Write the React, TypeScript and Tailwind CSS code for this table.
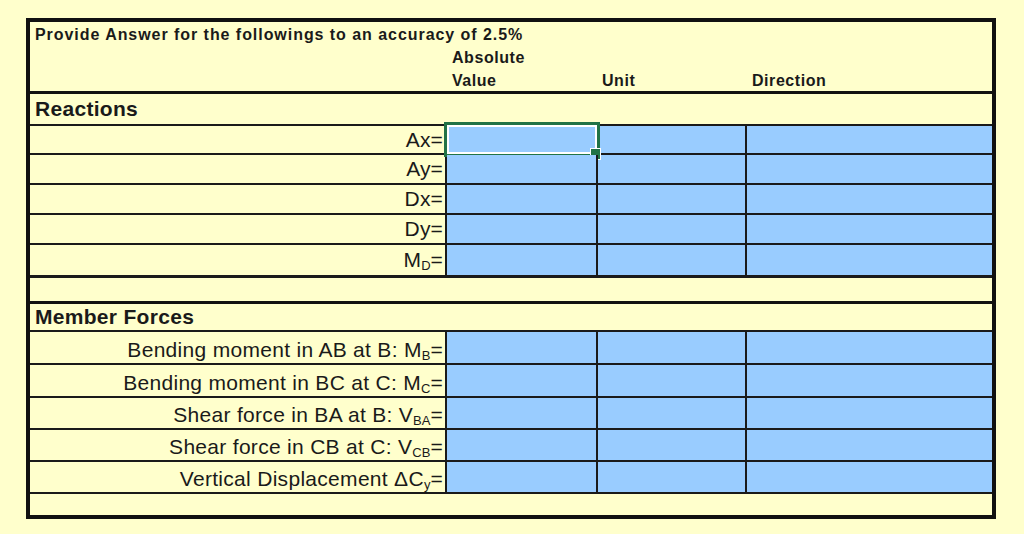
import React from "react";

const BLUE = "bg-[#99ccff]";

function Sub({ children }: { children: React.ReactNode }) {
  return <sub className="text-[13px] tracking-normal">{children}</sub>;
}

function DataRow({
  label,
  h,
  b,
  selected,
  member,
}: {
  label: React.ReactNode;
  h: string;
  b: string;
  selected?: boolean;
  member?: boolean;
}) {
  return (
    <div className={`flex ${h} ${b} border-[#1a1a1a]`}>
      <div
        className={`w-[417px] border-r-2 border-[#1a1a1a] flex items-center justify-end pr-[2px] text-[21px] leading-[24px] ${
          member ? "pt-[4px] tracking-[0.3px]" : "tracking-[0.15px]"
        }`}
      >
        <span>{label}</span>
      </div>
      <div className={`relative w-[151px] border-r-2 border-[#1a1a1a] ${BLUE}`}>
        {selected && (
          <>
            <div className="absolute left-[-3px] top-[-4px] w-[156px] h-[35px] border-[3px] border-[#217346] shadow-[inset_0_0_0_2px_#ffffff]" />
            <div className="absolute left-[143px] top-[22px] w-[11px] h-[12px] border border-white bg-[#217346]" />
          </>
        )}
      </div>
      <div className={`w-[149px] border-r-2 border-[#1a1a1a] ${BLUE}`} />
      <div className={`flex-1 ${BLUE}`} />
    </div>
  );
}

export default function App() {
  return (
    <div className="w-[1024px] h-[534px] bg-[#ffffcc] pt-[18px] pl-[26px] font-['Liberation_Sans',Arial,sans-serif] text-[#1a1a1a]">
      <div className="w-[970px] h-[501px] border-4 border-[#111111] flex flex-col">
        {/* header */}
        <div className="h-[72px] border-b-[3px] border-[#111111] pt-[1px] text-[16px] font-bold leading-[23px]">
          <div className="pl-[5px] tracking-[0.95px]">Provide Answer for the followings to an accuracy of 2.5%</div>
          <div className="flex tracking-[0.55px]">
            <div className="w-[417px]" />
            <div className="pl-[5px]">Absolute</div>
          </div>
          <div className="flex tracking-[0.55px]">
            <div className="w-[417px]" />
            <div className="w-[151px] pl-[5px]">Value</div>
            <div className="w-[149px] pl-[4px]">Unit</div>
            <div className="flex-1 pl-[5px]">Direction</div>
          </div>
        </div>
        {/* Reactions */}
        <div className="h-[32px] border-b-2 border-[#1a1a1a] flex items-center pl-[5px] text-[21px] font-bold leading-[24px] tracking-[0.3px]">
          Reactions
        </div>
        <DataRow label="Ax=" h="h-[29px]" b="border-b-2" selected />
        <DataRow label="Ay=" h="h-[30px]" b="border-b-2" />
        <DataRow label="Dx=" h="h-[30px]" b="border-b-2" />
        <DataRow label="Dy=" h="h-[30px]" b="border-b-2" />
        <DataRow
          label={
            <>
              M<Sub>D</Sub>=
            </>
          }
          h="h-[33px]"
          b="border-b-[3px]"
        />
        <div className="h-[26px] border-b-[3px] border-[#111111]" />
        <div className="h-[28px] border-b-2 border-[#1a1a1a] flex items-center pl-[5px] text-[21px] font-bold leading-[24px] tracking-[0.3px]">
          Member Forces
        </div>
        <DataRow
          member
          label={
            <>
              Bending moment in AB at B: M<Sub>B</Sub>=
            </>
          }
          h="h-[33px]"
          b="border-b-2"
        />
        <DataRow
          member
          label={
            <>
              Bending moment in BC at C: M<Sub>C</Sub>=
            </>
          }
          h="h-[33px]"
          b="border-b-2"
        />
        <DataRow
          member
          label={
            <>
              Shear force in BA at B: V<Sub>BA</Sub>=
            </>
          }
          h="h-[32px]"
          b="border-b-2"
        />
        <DataRow
          member
          label={
            <>
              Shear force in CB at C: V<Sub>CB</Sub>=
            </>
          }
          h="h-[32px]"
          b="border-b-2"
        />
        <DataRow
          member
          label={
            <>
              Vertical Displacement ΔC<Sub>y</Sub>=
            </>
          }
          h="h-[32px]"
          b="border-b-2"
        />
        <div className="flex-1" />
      </div>
    </div>
  );
}
